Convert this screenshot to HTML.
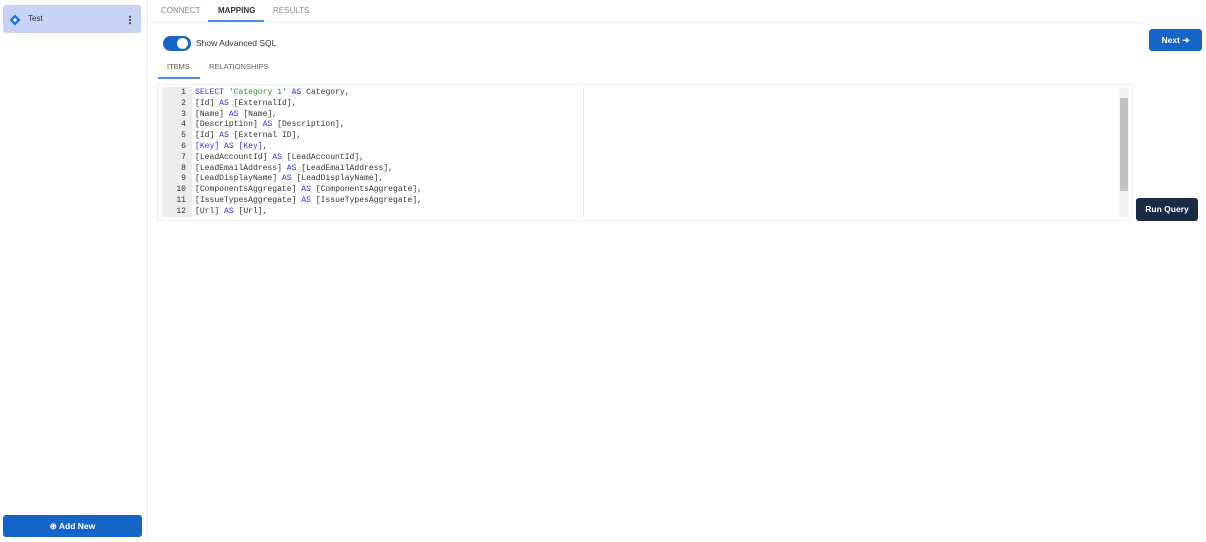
<!DOCTYPE html>
<html><head><style>
*{margin:0;padding:0;box-sizing:border-box}
body{width:1206px;height:542px;background:#fff;font-family:"Liberation Sans",sans-serif;position:relative;overflow:hidden}
.abs{position:absolute}
.side{left:0;top:0;width:148px;height:542px;border-right:1px solid #eceff3}
.sel{left:3px;top:5px;width:138px;height:28px;background:#c7d2f4;border-radius:3px}
.tab{top:0;height:22px;line-height:21px;font-size:8px;color:#888}
.code{font-family:"Liberation Mono",monospace;font-size:8.05px;line-height:10.8px;white-space:pre;color:#333}
.k{color:#3333ee}.s{color:#2a8a2a}
.btn{color:#fff;font-size:8.5px;font-weight:bold;text-align:center;border-radius:3px}
</style></head><body>
<div class="abs side"></div>
<div class="abs sel"></div>
<svg class="abs" style="left:9px;top:14px" width="12" height="12" viewBox="0 0 12 12"><path d="M6 0.5L11.5 6 6 11.5 0.5 6Z" fill="#1f74e0"/><rect x="4.5" y="4.5" width="3" height="3" fill="#fff" transform="rotate(45 6 6)"/></svg>
<div class="abs" style="left:28px;top:14px;font-size:8px;color:#333">Test</div>
<div class="abs" style="left:129px;top:15px;width:2px;height:10px;background:radial-gradient(circle,#444 1px,transparent 1.2px) 0 0/2px 3.3px"></div>
<div class="abs btn" style="left:3px;top:515px;width:139px;height:22px;background:#1565c9;line-height:22px">⊕ Add New</div>

<div class="abs" style="left:149px;top:22px;width:1057px;height:1px;background:#eef0f3"></div>
<div class="abs tab" style="left:161px">CONNECT</div>
<div class="abs tab" style="left:218px;color:#333;font-weight:bold">MAPPING</div>
<div class="abs" style="left:208px;top:20px;width:56px;height:2px;background:#4a8fe0"></div>
<div class="abs tab" style="left:273px">RESULTS</div>

<div class="abs" style="left:163px;top:36px;width:28px;height:15px;border-radius:8px;background:#1565c9"></div>
<div class="abs" style="left:177px;top:38px;width:11px;height:11px;border-radius:50%;background:#fff"></div>
<div class="abs" style="left:196px;top:38px;font-size:8.5px;color:#333">Show Advanced SQL</div>

<div class="abs btn" style="left:1149px;top:29px;width:53px;height:22px;background:#1565c9;line-height:22px">Next ➔</div>

<div class="abs" style="left:167px;top:62px;font-size:7.5px;color:#555">ITEMS</div>
<div class="abs" style="left:209px;top:62px;font-size:7.5px;color:#666">RELATIONSHIPS</div>
<div class="abs" style="left:158px;top:77px;width:42px;height:2px;background:#4a8fe0"></div>

<div class="abs" style="left:157px;top:84px;width:976px;height:137px;border:1px solid #eee"></div>
<div class="abs" style="left:162px;top:87px;width:30px;height:130px;background:#ececec"></div>
<div class="abs" style="left:583px;top:87px;width:1px;height:130px;background:#e8e8e8"></div>
<div class="abs" style="left:1119px;top:88px;width:10px;height:129px;background:#f2f2f2"></div>
<div class="abs" style="left:1120px;top:98px;width:8px;height:93px;background:#c1c1c1"></div>
<div class="abs code" style="left:164px;top:88px;width:22px;text-align:right;color:#333">1
2
3
4
5
6
7
8
9
10
11
12</div>
<div class="abs code" style="left:195px;top:88px"><span class="k">SELECT</span> <span class="s">'Category 1'</span> <span class="k">AS</span> Category,
[Id] <span class="k">AS</span> [ExternalId],
[Name] <span class="k">AS</span> [Name],
[Description] <span class="k">AS</span> [Description],
[Id] <span class="k">AS</span> [External ID],
<span class="k">[Key]</span> <span class="k">AS</span> <span class="k">[Key]</span>,
[LeadAccountId] <span class="k">AS</span> [LeadAccountId],
[LeadEmailAddress] <span class="k">AS</span> [LeadEmailAddress],
[LeadDisplayName] <span class="k">AS</span> [LeadDisplayName],
[ComponentsAggregate] <span class="k">AS</span> [ComponentsAggregate],
[IssueTypesAggregate] <span class="k">AS</span> [IssueTypesAggregate],
[Url] <span class="k">AS</span> [Url],</div>
<div class="abs btn" style="left:1136px;top:198px;width:62px;height:23px;background:#1b2a45;line-height:23px">Run Query</div>
</body></html>
